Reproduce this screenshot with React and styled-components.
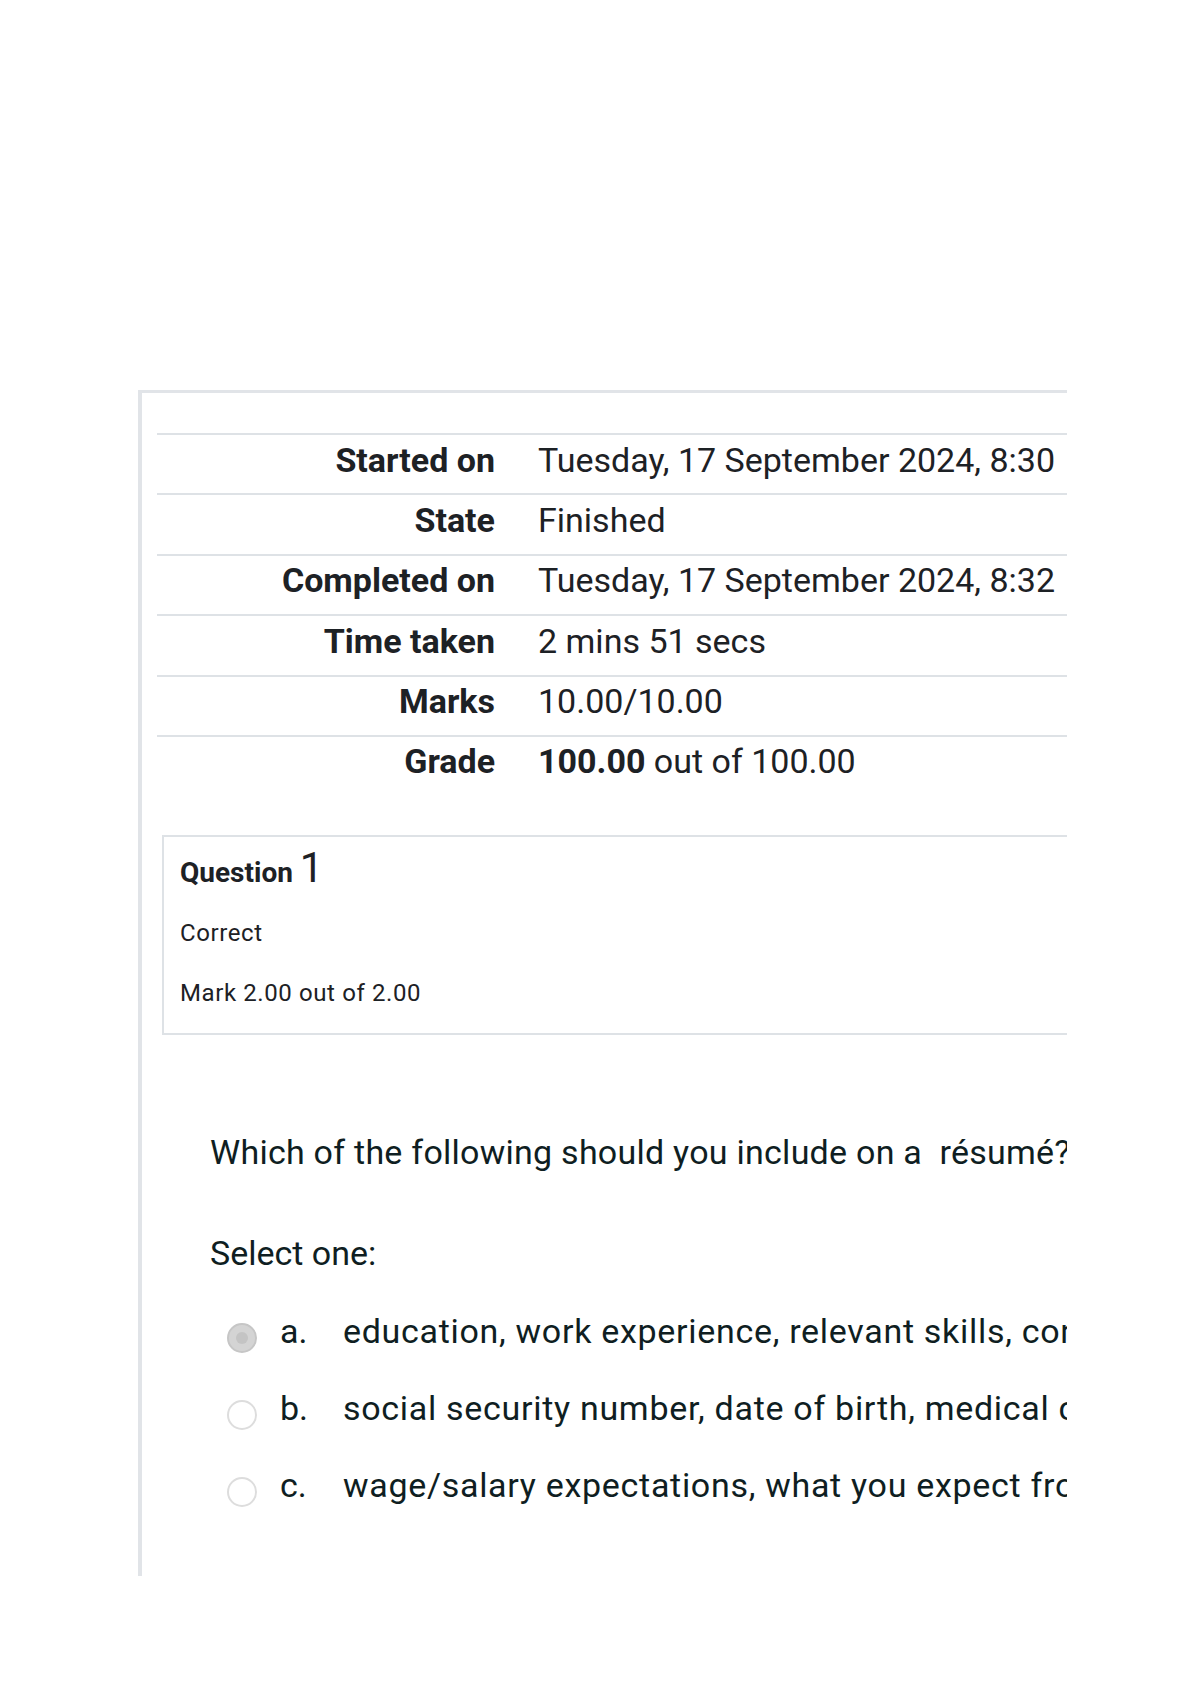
import React from "react";
import styled, { createGlobalStyle } from "styled-components";

const GlobalStyle = createGlobalStyle`
  html, body {
    margin: 0;
    padding: 0;
    background: #ffffff;
  }
  body {
    font-family: Roboto, "Liberation Sans", Arial, sans-serif;
    color: #1d2125;
  }
  * { box-sizing: border-box; }
`;

const Page = styled.div`
  width: 1200px;
  min-height: 1706px;
  padding: 390px 0 0 138px;
  background: #ffffff;
`;

const Card = styled.section`
  width: 929px;
  height: 1186px;
  border-left: 4px solid #e1e4e8;
  border-top: 3px solid #e1e4e8;
  overflow: hidden;
  white-space: nowrap;
`;

const SummaryTable = styled.div`
  margin: 40px 0 0 15px;
  width: 1400px;
`;

const SummaryRow = styled.div`
  display: grid;
  grid-template-columns: 359px 1fr;
  height: 60.4px;
  padding-top: 4.5px;
  border-top: 2px solid #dee2e6;
  font-size: 34px;
  line-height: 40px;
`;

const Label = styled.div`
  text-align: right;
  padding-right: 21px;
  font-weight: 700;
  color: #1d2125;
`;

const Value = styled.div`
  padding-left: 22px;
  color: #1d2125;
`;

const Strong = styled.b`
  font-weight: 700;
`;

const InfoBox = styled.div`
  margin: 40px 0 0 20px;
  width: 1400px;
  border: 2px solid #dee2e6;
  padding: 10px 0 25px 16px;
`;

const QTitle = styled.h3`
  margin: 0;
  font-size: 28px;
  font-weight: 700;
  line-height: 42px;
  color: #1d2125;
`;

const QNo = styled.span`
  font-size: 42px;
  font-weight: 400;
  line-height: 42px;
`;

const InfoLine = styled.div`
  margin-top: ${(p) => p.$gap}px;
  font-size: 24px;
  line-height: 30px;
  letter-spacing: 0.6px;
  color: #1d2125;
`;

const Formulation = styled.div`
  margin: 92px 0 0 68px;
  font-size: 34px;
  line-height: 51px;
  color: #0f1e22;
`;

const QText = styled.p`
  margin: 0;
  letter-spacing: 0.25px;
`;

const Prompt = styled.div`
  margin-top: 50px;
`;

const AnswerList = styled.div`
  margin-top: 27px;
  display: flex;
  flex-direction: column;
  gap: 26px;
`;

const Option = styled.div`
  display: flex;
  align-items: center;
  height: 51px;
`;

const Radio = styled.span`
  flex: none;
  width: 30px;
  height: 30px;
  margin: 13px 23px 0 17px;
  border-radius: 50%;
  border: 2px solid ${(p) => (p.$checked ? "#c6c6c6" : "#dddddd")};
  background: ${(p) => (p.$checked ? "#d4d4d4" : "#ffffff")};
  display: flex;
  align-items: center;
  justify-content: center;
  &::after {
    content: "";
    display: ${(p) => (p.$checked ? "block" : "none")};
    width: 12px;
    height: 12px;
    border-radius: 50%;
    background: #c4c4c4;
  }
`;

const AnswerNumber = styled.span`
  display: inline-block;
  width: 63px;
  flex: none;
`;

const AnswerText = styled.span`
  letter-spacing: 0.7px;
`;

const summary = [
  { label: "Started on", value: "Tuesday, 17 September 2024, 8:30" },
  { label: "State", value: "Finished" },
  { label: "Completed on", value: "Tuesday, 17 September 2024, 8:32" },
  { label: "Time taken", value: "2 mins 51 secs" },
  { label: "Marks", value: "10.00/10.00" },
];

const answers = [
  {
    no: "a.",
    text: "education, work experience, relevant skills, contact information",
    checked: true,
  },
  {
    no: "b.",
    text: "social security number, date of birth, medical conditions",
    checked: false,
  },
  {
    no: "c.",
    text: "wage/salary expectations, what you expect from the employer",
    checked: false,
  },
];

export default function App() {
  return (
    <>
      <GlobalStyle />
      <Page>
        <Card>
          <SummaryTable>
            {summary.map((r) => (
              <SummaryRow key={r.label}>
                <Label>{r.label}</Label>
                <Value>{r.value}</Value>
              </SummaryRow>
            ))}
            <SummaryRow>
              <Label>Grade</Label>
              <Value>
                <Strong>100.00</Strong> out of 100.00
              </Value>
            </SummaryRow>
          </SummaryTable>

          <InfoBox>
            <QTitle>
              Question <QNo>1</QNo>
            </QTitle>
            <InfoLine $gap={24}>Correct</InfoLine>
            <InfoLine $gap={30}>Mark 2.00 out of 2.00</InfoLine>
          </InfoBox>

          <Formulation>
            <QText>Which of the following should you include on a&nbsp; résumé?</QText>
            <Prompt>Select one:</Prompt>
            <AnswerList>
              {answers.map((a) => (
                <Option key={a.no}>
                  <Radio $checked={a.checked} />
                  <AnswerNumber>{a.no}</AnswerNumber>
                  <AnswerText>{a.text}</AnswerText>
                </Option>
              ))}
            </AnswerList>
          </Formulation>
        </Card>
      </Page>
    </>
  );
}
